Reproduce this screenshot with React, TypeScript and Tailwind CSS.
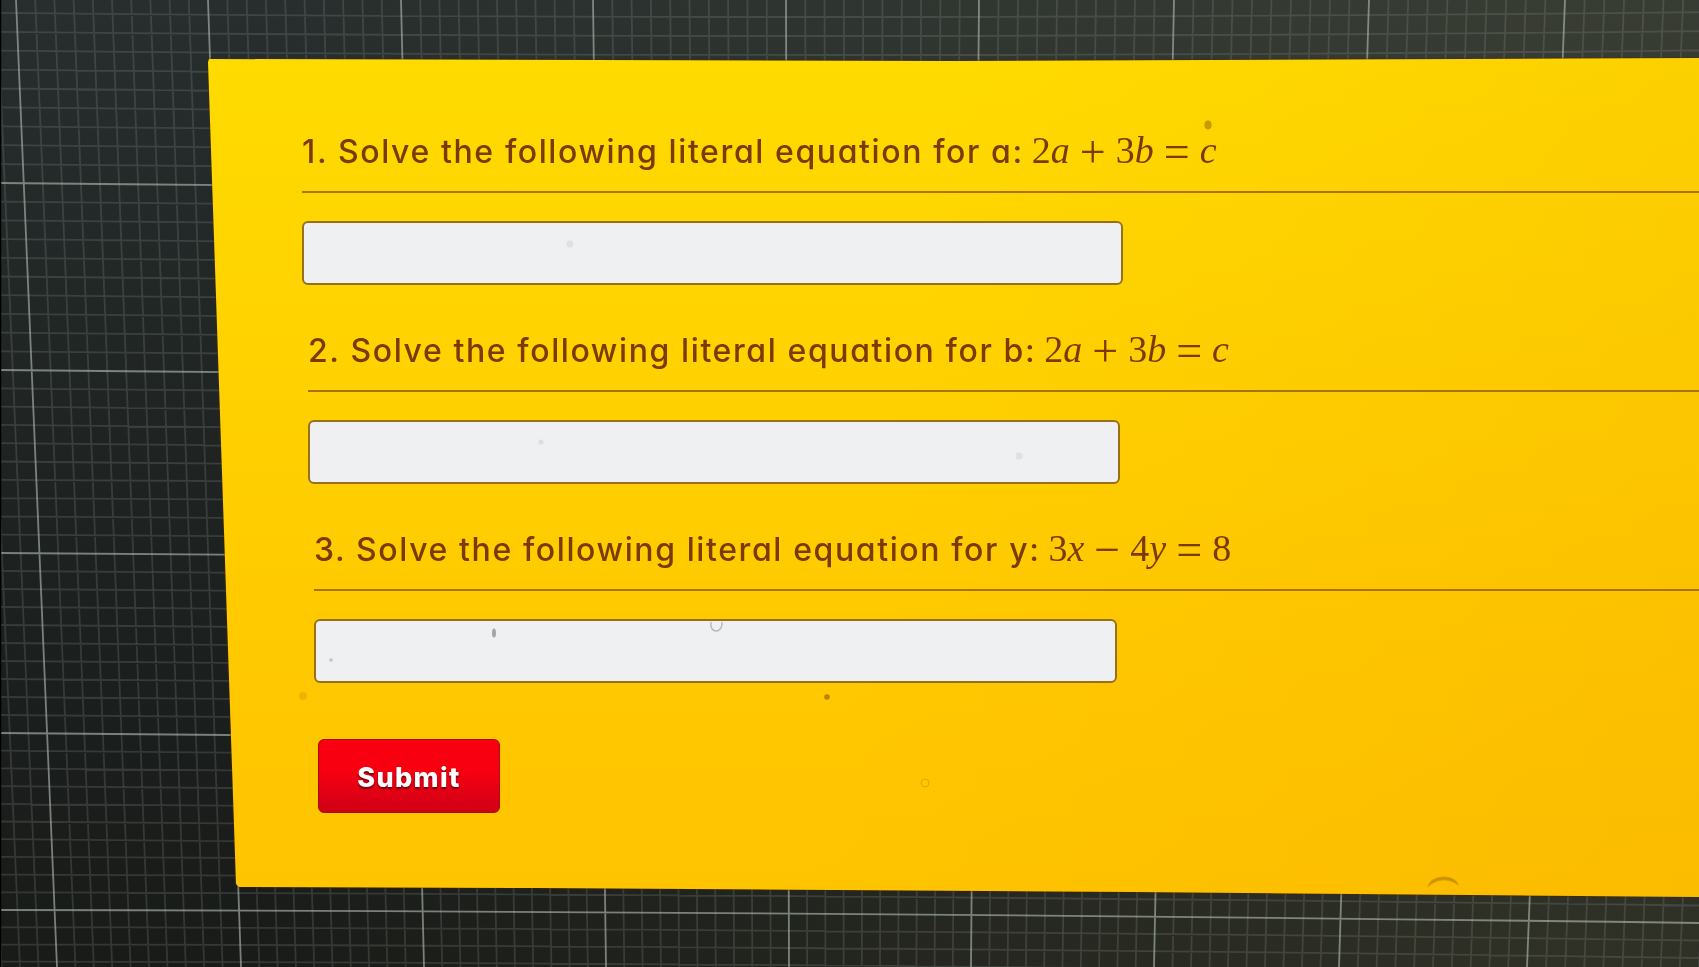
import { useState } from "react";

type Token = { text: string; kind: "number" | "variable" | "operator" };
type Question = { id: string; variable: string; equation: Token[] };

const num = (text: string): Token => ({ text, kind: "number" });
const sym = (text: string): Token => ({ text, kind: "variable" });
const op = (text: string): Token => ({ text, kind: "operator" });

const QUESTIONS: Question[] = [
  { id: "q1", variable: "a", equation: [num("2"), sym("a"), op("+"), num("3"), sym("b"), op("="), sym("c")] },
  { id: "q2", variable: "b", equation: [num("2"), sym("a"), op("+"), num("3"), sym("b"), op("="), sym("c")] },
  { id: "q3", variable: "y", equation: [num("3"), sym("x"), op("−"), num("4"), sym("y"), op("="), num("8")] },
];

// The sheet leans to the right on its way down: each row starts further in
// and its answer box is a little narrower.
const ROW_LEAN = 6;
const BOX_WIDTH = 821;
const BOX_TAPER = 9;

// Major grid lines: x at the top and bottom of the board.
const COLUMNS: [number, number][] = [
  [-176, -128], [16, 57], [208, 241], [401, 424], [593, 606], [786, 789],
  [979, 971], [1174, 1154], [1369, 1339], [1565, 1527], [1762, 1718],
];

// Major grid lines: y at the left, middle and right of the board.
const ROWS: [number, number, number][] = [
  [-6, -2, -7], [183, 188, 184], [370, 376, 376], [553, 560, 565],
  [733, 740, 748], [910, 914, 923], [1082, 1086, 1098],
];

const mix = (a: number, b: number, t: number) => a + (b - a) * t;
const columnPath = (top: number, bottom: number) => `M${top} 0L${bottom} 967`;
const rowPath = (l: number, m: number, r: number) => `M0 ${l}Q850 ${2 * m - (l + r) / 2} 1699 ${r}`;

function minorPaths(): string {
  const parts: string[] = [];
  const steps = [1, 2, 3, 4, 5, 6, 7, 8, 9];
  for (let i = 0; i < COLUMNS.length - 1; i++) {
    for (const s of steps) {
      const t = s / 10;
      parts.push(columnPath(mix(COLUMNS[i][0], COLUMNS[i + 1][0], t), mix(COLUMNS[i][1], COLUMNS[i + 1][1], t)));
    }
  }
  for (let i = 0; i < ROWS.length - 1; i++) {
    for (const s of steps) {
      const t = s / 10;
      const [a, b] = [ROWS[i], ROWS[i + 1]];
      parts.push(rowPath(mix(a[0], b[0], t), mix(a[1], b[1], t), mix(a[2], b[2], t)));
    }
  }
  return parts.join("");
}

const MINOR = minorPaths();
const MAJOR = COLUMNS.map((c) => columnPath(...c)).join("") + ROWS.map((r) => rowPath(...r)).join("");

function GridBackdrop() {
  return (
    <svg
      aria-hidden="true"
      viewBox="0 0 1699 967"
      preserveAspectRatio="none"
      className="pointer-events-none absolute inset-0 h-full w-full"
    >
      <path d={MINOR} fill="none" stroke="#93a09c" strokeOpacity="0.22" strokeWidth="1.8" />
      <path d={MAJOR} fill="none" stroke="#a9b5ac" strokeOpacity="0.66" strokeWidth="1.8" />
      <path d="M0.5 0V967" stroke="#000" strokeWidth="1.5" />
    </svg>
  );
}

// Dust and small marks on the glass.
function Marks() {
  return (
    <svg
      aria-hidden="true"
      viewBox="0 0 1699 967"
      preserveAspectRatio="none"
      className="pointer-events-none absolute inset-0 h-full w-full"
    >
      <ellipse cx="1208" cy="125" rx="3.6" ry="4.4" fill="#c99a00" />
      <ellipse cx="494" cy="633" rx="2" ry="4.5" fill="#a5a5a5" />
      <path d="M711 622C709 634 723 634 722 622" fill="none" stroke="#b9b9b7" strokeWidth="1.5" />
      <circle cx="570" cy="244" r="3.5" fill="#dfe1e1" />
      <circle cx="1019" cy="456" r="3.5" fill="#dfe1e2" />
      <circle cx="541" cy="442" r="2.5" fill="#dcdede" />
      <circle cx="331" cy="660" r="1.8" fill="#c2c3c4" />
      <circle cx="827" cy="697" r="2.8" fill="#b98500" />
      <circle cx="303" cy="696" r="4" fill="#dfa900" fillOpacity="0.6" />
      <circle cx="925" cy="783" r="4" fill="none" stroke="#e0a900" />
      <path d="M1428 887C1430 874 1456 874 1458 885C1450 878 1436 878 1428 887Z" fill="#c99300" stroke="#dba000" />
    </svg>
  );
}

function Equation({ tokens }: { tokens: Token[] }) {
  return (
    <span className="whitespace-nowrap font-['Liberation_Serif',serif] text-[38px] font-normal leading-10">
      {tokens.map((token, i) =>
        token.kind === "operator" ? (
          <span key={i} className="mx-2.5 align-[-4px] text-[46px] leading-8">{token.text}</span>
        ) : token.kind === "variable" ? (
          <i key={i}>{token.text}</i>
        ) : (
          <span key={i}>{token.text}</span>
        ),
      )}
    </span>
  );
}

export default function App() {
  const [answers, setAnswers] = useState<Record<string, string>>({});

  return (
    <main className="relative min-h-screen overflow-hidden bg-[linear-gradient(to_bottom,#272e2d_0%,#1b1f1d_70%,#191b18_100%)] font-['Inter',sans-serif]">
      <div className="absolute inset-0 bg-[linear-gradient(to_right,transparent_15%,rgba(88,88,64,0.34)_90%)]" />
      <GridBackdrop />
      <div className="relative ml-[208px] pt-[58px] drop-shadow-[0_0_1px_#4a2600]">
        <form
          onSubmit={(event) => event.preventDefault()}
          className="bg-[linear-gradient(100deg,transparent_45%,rgba(235,150,0,0.18)_100%),linear-gradient(to_bottom,#ffdb00_0%,#ffd200_35%,#ffc800_75%,#ffc400_100%)] pt-[64px] pb-[84px] pl-[94px] [clip-path:polygon(1px_1px,50%_3px,100%_0,100%_100%,62%_calc(100%_-_5px),22%_calc(100%_-_9px),31px_calc(100%_-_10px),28px_calc(100%_-_13px),0_4px)]"
        >
          {QUESTIONS.map((question, index) => (
            <div key={question.id} className="mb-9" style={{ paddingLeft: index * ROW_LEAN }}>
              <label
                htmlFor={question.id}
                className="flex h-[71px] items-baseline gap-2 border-b-2 border-[#a87400] pt-2 text-[32px] font-medium leading-10 text-[#7b3a00]"
              >
                <span className="whitespace-nowrap tracking-wider [font-feature-settings:'cv11']">
                  {index + 1}. Solve the following literal equation for {question.variable}:
                </span>
                <Equation tokens={question.equation} />
              </label>
              <div className="pt-7" style={{ maxWidth: BOX_WIDTH - index * BOX_TAPER }}>
                <input
                  id={question.id}
                  type="text"
                  value={answers[question.id] ?? ""}
                  onChange={(event) => setAnswers({ ...answers, [question.id]: event.target.value })}
                  className="block h-16 w-full rounded-md border-2 border-[#98701c] bg-[#eef0f1] px-4 text-2xl text-[#7b3a00] outline-none"
                />
              </div>
            </div>
          ))}
          <div className="pt-5 pl-4">
            <button
              type="submit"
              className="h-[74px] w-[182px] rounded-md border border-[#a80d0d] bg-[linear-gradient(to_bottom,#f8000f,#f80010_40%,#cf0016)] pt-1 text-[27px] font-extrabold tracking-wider text-white [text-shadow:0_2px_2px_rgba(70,0,20,0.7)]"
            >
              Submit
            </button>
          </div>
        </form>
      </div>
      <Marks />
    </main>
  );
}
